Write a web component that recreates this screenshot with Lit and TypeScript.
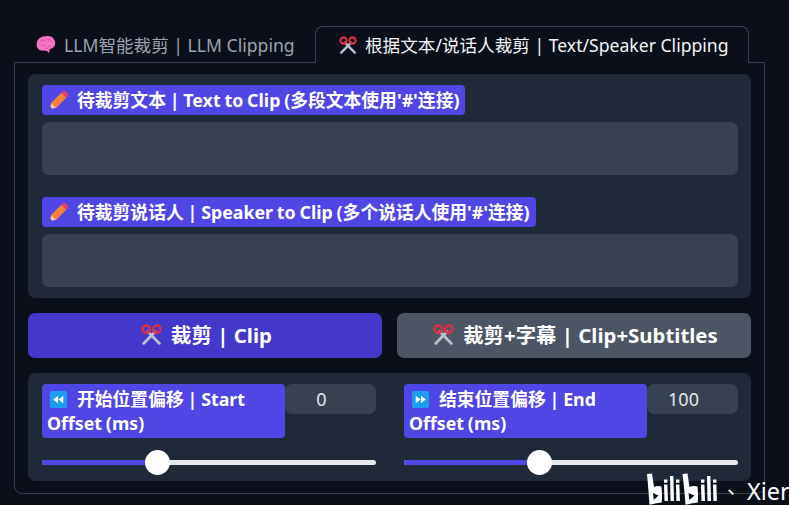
import { LitElement, html, css, svg } from "lit";
import { customElement } from "lit/decorators.js";

const scissors = html`<svg class="ico" viewBox="0 0 20 20" aria-hidden="true">
  <path d="M2.500 18.500 L13.400 7.400 M17.500 18.500 L6.600 7.400" stroke="#bcc0cf" stroke-width="2.600" stroke-linecap="round" fill="none"/>
  <circle cx="5" cy="5" r="3.500" fill="none" stroke="#dd2e44" stroke-width="2.300"/>
  <circle cx="15" cy="5" r="3.500" fill="none" stroke="#dd2e44" stroke-width="2.300"/>
</svg>`;

const brain = html`<svg class="ico brain" viewBox="0 0 20 20" aria-hidden="true">
  <path d="M10 1.200c3-.5 6.800.6 8 3.200 1.500 1.500 1.700 5 .4 6.800-1 1.700-2.800 2.600-4.800 2.700-.1 1.200.3 2.600-.5 3.600-1 .6-1.600-.6-1.800-1.700-.9.4-2 .4-3-.2C5.500 16 3.600 15.400 2.400 14 .8 12.800.2 10 .8 8c.2-2.600 2-4.800 4.400-5.700C6.800 1.300 8.500 1.100 10 1.200z" fill="#f772c0"/>
  <path d="M5 5.500c1.500-.8 3-.5 4 .5M12 4.500c1.500 0 2.800.8 3.300 2M6 10c.8.700 1.700.7 2.400.1M12 11c.7.500 1.500.5 2.200 0M9.500 13.200c.5.300 1 .3 1.500 0" stroke="#d9489c" stroke-width=".9" fill="none" stroke-linecap="round"/>
</svg>`;

const pencil = html`<svg class="ico pen" viewBox="0 0 20 20" aria-hidden="true">
  <path d="M.8 19.200 L2.400 12.400 L7.600 17.600 Z" fill="#f7c59f"/>
  <path d="M2.400 12.400 L13 1.800 L18.200 7 L7.600 17.600 Z" fill="#f4803c"/>
  <path d="M13 1.800 L14.800 .4 C15.600 -.2 16.800 -.2 17.600 .6 L19.400 2.400 C20.200 3.200 20.200 4.400 19.600 5.200 L18.200 7 Z" fill="#e0466a"/>
  <path d="M.8 19.200 L1.400 16.700 L3.300 18.600 Z" fill="#3b3f5c"/>
</svg>`;

const skip = (forward: boolean) => html`<svg class="ico pen" viewBox="0 0 20 20" aria-hidden="true">
  <rect x="1" y="1" width="18" height="18" rx="2" fill="#1e9cf0"/>
  ${forward
    ? svg`<path d="M5 6 L10 10 L5 14 Z M10.500 6 L15.500 10 L10.500 14 Z" fill="#fff"/>`
    : svg`<path d="M15 6 L10 10 L15 14 Z M9.500 6 L4.500 10 L9.500 14 Z" fill="#fff"/>`}
</svg>`;

const bilibili = html`<svg class="logo" viewBox="0 0 72 32" aria-hidden="true">
  <g fill="#fff">
    <path d="M1 1 L6 .4 L8 14 C10.500 12.800 13 12.800 15.500 13.600 C16 19 16.300 25 15.800 29.500 C11 30 7 31 3.500 31.800 C2.800 22 2 11 1 1 Z"/>
    <path d="M7 20 L12.500 22.500 L7.800 27 Z" fill="#0b0f19"/>
    <path d="M18 6.500h3.400v3.200H18zM18 11.500h3.400L22 28h-3.500zM24 3h3.400l.6 25h-3.500zM30 6.500h3.400v3.200H30zM30 11.500h3.400l.5 16.500h-3.500z"/>
    <path d="M36.500 1 L41.500 .4 L43.500 14 C46 12.800 49 12.800 51.500 13.600 C52 19 52.300 25 51.800 29.500 C47 30 43 31 39.500 31.800 C38.800 22 37.800 11 36.500 1 Z"/>
    <path d="M42.500 20 L48.500 22.500 L43.300 27 Z" fill="#0b0f19"/>
    <path d="M55 6.500h3.400v3.200H55zM55 11.500h3.400L59 28h-3.500zM61 3h3.400l.6 25h-3.500zM67 6.500h3.400v3.200H67zM67 11.500h3.400l.5 16.500h-3.500z"/>
  </g>
</svg>`;

@customElement("app-root")
export class AppRoot extends LitElement {
  static styles = css`
    :host {
      display: block;
      width: 789px;
      height: 505px;
      overflow: hidden;
      position: relative;
      background: #0b0f19;
      font-family: "Noto Sans", "Noto Sans CJK SC", sans-serif;
      color: #f3f4f6;
    }
    * { box-sizing: border-box; }
    .page { padding: 26px 24px 0 14px; }
    .tabs { display: flex; height: 37px; margin-bottom: -1px; position: relative; z-index: 1; }
    .tab {
      display: flex;
      align-items: center;
      gap: 8px;
      height: 37px;
      padding-bottom: 1px;
      font-size: 17.600px;
      white-space: nowrap;
      color: #9ca3af;
      border: 1px solid transparent;
      border-bottom: none;
    }
    .tab.first { width: 301px; padding-left: 21px; }
    .tab.active {
      width: 434px;
      padding-left: 23px;
      color: #f3f4f6;
      background: #0b0f19;
      border-color: #374151;
      border-radius: 8px 8px 0 0;
    }
    .panel {
      border: 1px solid #374151;
      border-radius: 0 0 8px 8px;
      height: 432px;
      padding: 11px 13px;
      display: flex;
      flex-direction: column;
      gap: 15px;
    }
    .block { background: #1f2937; border-radius: 7px; padding: 11px 13px 11px 14px; }
    .field + .field { margin-top: 22px; }
    .label {
      display: inline-block;
      background: #4f46e5;
      color: #fff;
      font-size: 17.800px;
      font-weight: 700;
      line-height: 24px;
      word-spacing: -0.800px;
      padding: 3px 6px 3px 5px;
      border-radius: 4px;
    }
    .ico { width: 18px; height: 18px; flex: none; }
    .ico.brain { width: 20px; height: 20px; }
    .ico.pen { width: 19px; height: 19px; margin: 0 9px 0 2px; vertical-align: -3px; }
    .input { height: 53px; margin-top: 7px; background: #374151; border-radius: 7px; }
    .buttons { display: grid; grid-template-columns: 1fr 1fr; gap: 15px; }
    .btn {
      height: 45px;
      padding: 0 0 3px 3px;
      display: flex;
      align-items: center;
      justify-content: center;
      gap: 9px;
      border-radius: 7px;
      color: #fff;
      font-size: 20.400px;
      font-weight: 700;
    }
    .btn.primary { background: #4338ca; }
    .btn.secondary { background: #4b5563; }
    .btn .ico { width: 21px; height: 21px; }
    .sliders { display: grid; grid-template-columns: 334px 334px; gap: 28px; height: 108px; }
    .top { display: flex; align-items: flex-start; }
    .top .label { flex: 1; min-width: 0; height: 54px; display: block; }
    .num {
      flex: none;
      width: 91px;
      height: 30px;
      padding-right: 18px;
      background: #374151;
      border-radius: 7px;
      color: #e5e7eb;
      font-size: 18px;
      line-height: 30px;
      text-align: center;
    }
    .slider { position: relative; height: 25px; margin-top: 12px; display: flex; align-items: center; }
    .track { flex: 1; height: 5px; background: #e5e7eb; border-radius: 3px; overflow: hidden; }
    .fill { height: 100%; background: #4f46e5; }
    .thumb {
      position: absolute;
      top: 0;
      width: 25px;
      height: 25px;
      margin-left: -12.500px;
      border-radius: 50%;
      background: #fff;
    }
    .mark {
      position: absolute;
      left: 646px;
      top: 473px;
      display: flex;
      align-items: flex-end;
      color: #fff;
      white-space: nowrap;
    }
    .logo { width: 72px; height: 32px; flex: none; }
    .mark span { line-height: 28px; }
    .mark .sep { font-size: 20px; margin-left: 9px; width: 20px; position: relative; top: -4px; }
    .mark .name { font-size: 23.500px; }
  `;

  private slider(value: number) {
    return html`<div class="slider">
      <div class="track"><div class="fill" style="width:${value}%"></div></div>
      <div class="thumb" style="left:${value}%"></div>
    </div>`;
  }

  render() {
    return html`
      <div class="page">
        <div class="tabs">
          <div class="tab first">${brain}<span>LLM智能裁剪 | LLM Clipping</span></div>
          <div class="tab active">${scissors}<span>根据文本/说话人裁剪 | Text/Speaker Clipping</span></div>
        </div>
        <div class="panel">
          <div class="block">
            <div class="field">
              <span class="label">${pencil}待裁剪文本 | Text to Clip (多段文本使用'#'连接)</span>
              <div class="input"></div>
            </div>
            <div class="field">
              <span class="label">${pencil}待裁剪说话人 | Speaker to Clip (多个说话人使用'#'连接)</span>
              <div class="input"></div>
            </div>
          </div>
          <div class="buttons">
            <div class="btn primary">${scissors}<span>裁剪 | Clip</span></div>
            <div class="btn secondary">${scissors}<span>裁剪+字幕 | Clip+Subtitles</span></div>
          </div>
          <div class="block sliders">
            <div>
              <div class="top">
                <span class="label">${skip(false)}开始位置偏移 | Start Offset (ms)</span>
                <div class="num">0</div>
              </div>
              ${this.slider(34.6)}
            </div>
            <div>
              <div class="top">
                <span class="label">${skip(true)}结束位置偏移 | End Offset (ms)</span>
                <div class="num">100</div>
              </div>
              ${this.slider(40.6)}
            </div>
          </div>
        </div>
      </div>
      <div class="mark">${bilibili}<span class="sep">、</span><span class="name">Xier</span></div>
    `;
  }
}
